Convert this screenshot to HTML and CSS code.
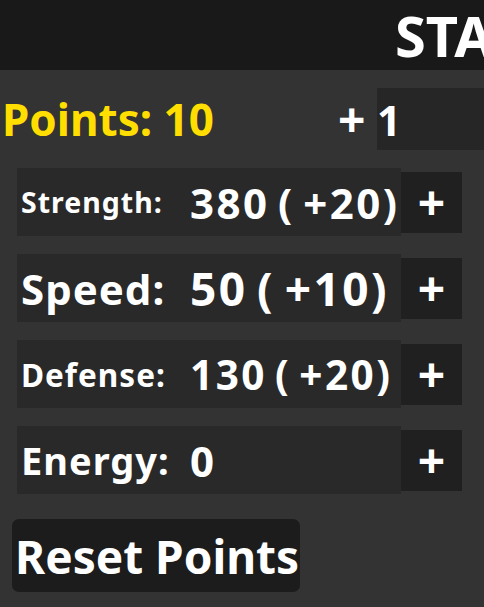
FILE: index.html
```html
<!DOCTYPE html>
<html lang="en">
<head>
    <meta charset="UTF-8">
    <title>Stats</title>
    <link rel="stylesheet" href="styles.css">
</head>
<body>
    <div class="header">
        <span class="title">STATS</span>
    </div>

    <div class="points-row">
        <span class="points">Points: 10</span>
        <span class="plus-sign">+</span>
        <div class="amount">1</div>
    </div>

    <div class="stats">
        <div class="stat">
            <div class="stat-box">
                <span class="label label-strength">Strength:</span>
                <span class="value value-strength">380 ( +20)</span>
            </div>
            <button class="add">+</button>
        </div>
        <div class="stat">
            <div class="stat-box">
                <span class="label label-speed">Speed:</span>
                <span class="value value-speed">50 ( +10)</span>
            </div>
            <button class="add">+</button>
        </div>
        <div class="stat">
            <div class="stat-box">
                <span class="label label-defense">Defense:</span>
                <span class="value value-defense">130 ( +20)</span>
            </div>
            <button class="add">+</button>
        </div>
        <div class="stat">
            <div class="stat-box">
                <span class="label label-energy">Energy:</span>
                <span class="value value-energy">0</span>
            </div>
            <button class="add">+</button>
        </div>
    </div>

    <button class="reset">Reset Points</button>
</body>
</html>
```

FILE: styles.css
```css
body {
    margin: 0;
    background-color: #333333;
    font-family: "Noto Sans", sans-serif;
    font-weight: 700;
    color: white;
    overflow: hidden;
    height: 607px;
}
.header {
    height: 70px;
    background-color: #191919;
    display: flex;
    align-items: center;
    padding-left: 395px;
    white-space: nowrap;
    overflow: hidden;
}
.title {
    font-size: 56px;
}
.points-row {
    display: flex;
    align-items: center;
    height: 62px;
    margin-top: 18px;
}
.points {
    color: #ffde00;
    font-size: 44px;
    margin-left: 2px;
    width: 336px;
}
.plus-sign {
    font-size: 48px;
    line-height: 1;
    width: 39px;
}
.amount {
    flex: 1;
    align-self: stretch;
    background-color: #262626;
    display: flex;
    align-items: center;
    font-size: 42px;
    padding-left: 0;
}
.stats {
    display: flex;
    flex-direction: column;
    gap: 18px;
    margin-top: 18px;
    padding-left: 17px;
}
.stat {
    display: flex;
    align-items: center;
    height: 68px;
}
.stat-box {
    width: 384px;
    height: 68px;
    background-color: #292929;
    display: flex;
    align-items: center;
    white-space: nowrap;
}
.label {
    width: 169px;
    padding-left: 4px;
    letter-spacing: 1px;
}
.label-strength { font-size: 28.5px; }
.label-speed { font-size: 42px; }
.label-defense { font-size: 31.5px; }
.label-energy { font-size: 38px; }
.value {
    letter-spacing: 2.5px;
    word-spacing: -5px;
}
.value-strength { font-size: 42px; }
.value-speed { font-size: 46px; }
.value-defense { font-size: 40.5px; }
.value-energy { font-size: 42px; }
.add {
    width: 61px;
    height: 61px;
    border: none;
    background-color: #202020;
    color: white;
    font-family: inherit;
    font-weight: 700;
    font-size: 48px;
    line-height: 1;
    padding: 0;
}
.reset {
    margin: 25px 0 0 12px;
    width: 288px;
    height: 73px;
    border: none;
    border-radius: 7px;
    background-color: #1c1c1c;
    color: white;
    font-family: inherit;
    font-weight: 700;
    font-size: 46px;
    padding: 0 0 0 3px;
    text-align: left;
    white-space: nowrap;
}
```
